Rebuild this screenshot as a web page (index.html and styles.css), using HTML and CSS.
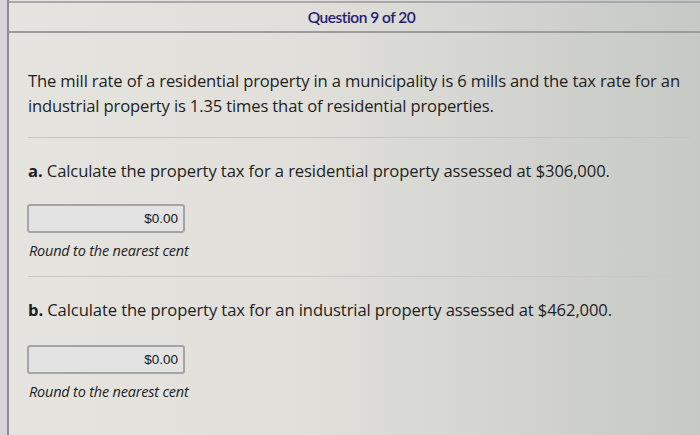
FILE: index.html
```html
<!DOCTYPE html>
<html>
<head>
<meta charset="utf-8">
<link rel="stylesheet" href="styles.css">
</head>
<body>
<div class="screen">
  <div class="rail"></div>
  <div class="main">
    <header class="qhead">Question 9 of 20</header>
    <section class="intro">
      <p>The mill rate of a residential property in a municipality is 6 mills and the tax rate for an industrial property is 1.35 times that of residential properties.</p>
    </section>
    <section class="part">
      <p class="prompt"><b>a.</b> Calculate the property tax for a residential property assessed at $306,000.</p>
      <div class="answer">$0.00</div>
      <p class="hint">Round to the nearest cent</p>
    </section>
    <section class="part last">
      <p class="prompt"><b>b.</b> Calculate the property tax for an industrial property assessed at $462,000.</p>
      <div class="answer">$0.00</div>
      <p class="hint">Round to the nearest cent</p>
    </section>
  </div>
</div>
</body>
</html>
```
FILE: styles.css
```css
* { box-sizing: border-box; }
html, body { margin: 0; padding: 0; }
body {
  width: 700px;
  height: 435px;
  overflow: hidden;
  font-family: "Open Sans", "Liberation Sans", sans-serif;
  color: #1e1e1e;
}
.screen {
  display: flex;
  width: 700px;
  height: 435px;
  background: linear-gradient(90deg, #e5e4df 0%, #e0dfda 45%, #d2d3cf 75%, #c7c9c5 100%);
}
.rail {
  width: 9px;
  flex: none;
  background: #d7d5da;
  border-right: 2px solid #8d8b93;
}
.main {
  flex: 1;
  display: flex;
  flex-direction: column;
}
.qhead {
  flex: none;
  margin-top: 1px;
  height: 32px;
  border-top: 2px solid #a9a9ab;
  border-bottom: 2px solid #9c9c9f;
  display: flex;
  align-items: center;
  justify-content: center;
  padding-left: 14px;
  padding-bottom: 1px;
  font-family: "Lato", sans-serif;
  font-weight: 600;
  font-size: 15.5px;
  letter-spacing: -0.5px;
  color: #1f2170;
}
.intro {
  flex: none;
  margin: 0 10px 0 19px;
  padding: 35px 0 19px;
  border-bottom: 1px solid #c4c4c1;
}
.intro p {
  margin: 0;
  font-size: 16.6px;
  line-height: 25px;
  letter-spacing: -0.15px;
}
.part {
  flex: none;
  margin: 0 10px 0 19px;
  padding: 21px 0 15px;
  border-bottom: 1px solid #c8c8c5;
}
.part.last { border-bottom: none; padding-top: 21px; }
.prompt {
  margin: 0;
  font-size: 16.6px;
  line-height: 24px;
  letter-spacing: -0.1px;
}
.prompt b { font-weight: 700; }
.answer {
  margin-top: 21px;
  margin-left: -1px;
  width: 158px;
  height: 29px;
  border: 2px solid #a5a5a8;
  border-radius: 3px;
  background: #e3e3e3;
  display: flex;
  align-items: center;
  justify-content: flex-end;
  padding-right: 5px;
  font-family: "Liberation Sans", Arial, sans-serif;
  font-size: 13.5px;
  color: #151515;
}
.part.last .answer { margin-top: 23px; }
.hint {
  margin: 8px 0 0 1px;
  font-style: italic;
  font-size: 14.5px;
  line-height: 20px;
  letter-spacing: -0.2px;
}
```
